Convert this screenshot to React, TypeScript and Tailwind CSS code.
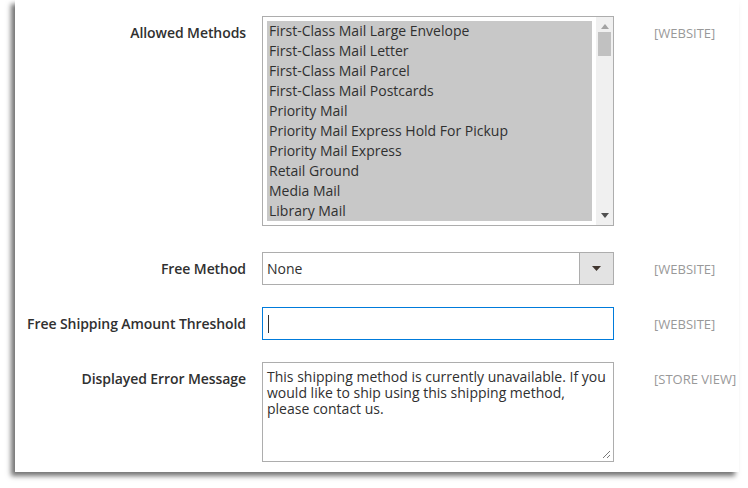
const methods = [
  "First-Class Mail Large Envelope",
  "First-Class Mail Letter",
  "First-Class Mail Parcel",
  "First-Class Mail Postcards",
  "Priority Mail",
  "Priority Mail Express Hold For Pickup",
  "Priority Mail Express",
  "Retail Ground",
  "Media Mail",
  "Library Mail",
];

function FieldRow({
  label,
  scope,
  children,
}: {
  label: string;
  scope: string;
  children: React.ReactNode;
}) {
  return (
    <div className="flex items-start">
      <div className="w-[231px] pt-2 text-right text-[14px] leading-[18px] font-semibold tracking-[-0.08px] text-[#303030]">
        {label}
      </div>
      <div className="ml-4 w-[352px]">{children}</div>
      <div className="ml-10 pt-2 text-[13px] leading-[18px] text-[#999999]">
        {scope}
      </div>
    </div>
  );
}

export default function App() {
  return (
    <div className="h-[488px] w-[748px] overflow-hidden bg-white font-['Open_Sans',sans-serif]">
      <div className="ml-[15px] h-[472px] w-[724px] bg-white pt-4 shadow-[-4px_4px_5px_rgba(0,0,0,0.55)]">
        {/* Allowed methods multiselect */}
        <FieldRow label="Allowed Methods" scope="[WEBSITE]">
          <div className="flex h-[210px] border border-[#adadad] bg-white p-1">
            <div className="flex-1 bg-[#c8c8c8] pl-[2px]">
              {methods.map((m) => (
                <div
                  key={m}
                  className="h-5 text-[14px] leading-5 whitespace-nowrap text-[#303030]"
                >
                  {m}
                </div>
              ))}
            </div>
            <div className="ml-1 flex w-[17px] -mr-1 -my-1 flex-col items-center bg-[#f0f0f0] py-1">
              <svg width="8" height="5" viewBox="0 0 8 5" className="mt-[3px]">
                <path d="M0 5 L4 0 L8 5 Z" fill="#a3a3a3" />
              </svg>
              <div className="mt-[3px] h-6 w-[13px] bg-[#c1c1c1]" />
              <div className="flex-1" />
              <svg width="8" height="5" viewBox="0 0 8 5" className="mb-[3px]">
                <path d="M0 0 L8 0 L4 5 Z" fill="#505050" />
              </svg>
            </div>
          </div>
        </FieldRow>

        {/* Free method select */}
        <div className="mt-[26px]">
          <FieldRow label="Free Method" scope="[WEBSITE]">
            <div className="flex h-[33px] border border-[#adadad] bg-white">
              <div className="flex-1 pl-[4px] text-[14px] leading-[31px] text-[#303030]">
                None
              </div>
              <div className="flex w-[34px] items-center justify-center border-l border-[#adadad] bg-[#e3e3e3]">
                <svg width="9" height="5" viewBox="0 0 9 5">
                  <path d="M0 0 L9 0 L4.5 5 Z" fill="#41362f" />
                </svg>
              </div>
            </div>
          </FieldRow>
        </div>

        {/* Threshold input */}
        <div className="mt-[22px]">
          <FieldRow label="Free Shipping Amount Threshold" scope="[WEBSITE]">
            <div className="flex h-[33px] items-center border border-[#007bdb] bg-white pl-[5px]">
              <div className="h-[18px] w-px bg-[#303030]" />
            </div>
          </FieldRow>
        </div>

        {/* Error message textarea */}
        <div className="mt-[22px]">
          <FieldRow label="Displayed Error Message" scope="[STORE VIEW]">
            <div className="relative h-[100px] border border-[#adadad] bg-white pt-[6px] pl-[4px] pr-1 text-[14px] leading-4 text-[#303030]">
              This shipping method is currently unavailable. If you would like
              to ship using this shipping method, please contact us.
              <svg
                width="9"
                height="9"
                viewBox="0 0 9 9"
                className="absolute right-[2px] bottom-[2px]"
              >
                <path d="M8 1 L1 8 M8 5 L5 8" stroke="#7a7a7a" strokeWidth="1" />
              </svg>
            </div>
          </FieldRow>
        </div>
      </div>
    </div>
  );
}
